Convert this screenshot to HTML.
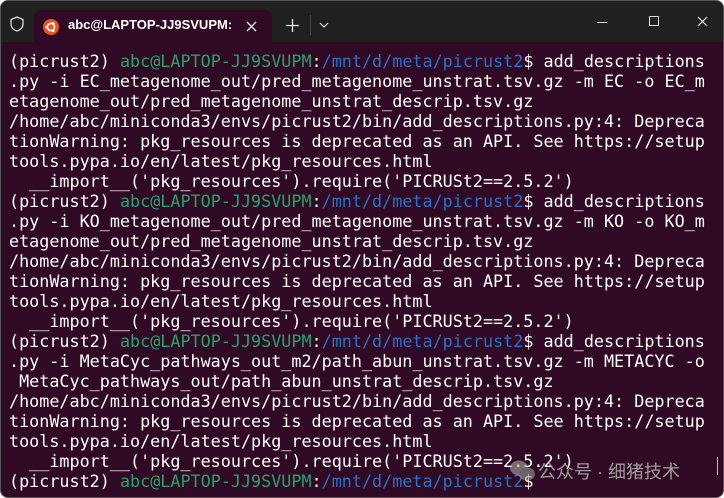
<!DOCTYPE html>
<html><head><meta charset="utf-8"><style>
*{margin:0;padding:0;box-sizing:border-box}
body{width:724px;height:498px;background:#fff;overflow:hidden;font-family:"Liberation Sans",sans-serif}
.win{position:absolute;left:0;top:0;width:724px;height:498px;background:#300a24;border-radius:8px;overflow:hidden;border:1px solid #555}
.tb{position:absolute;left:0;top:0;width:724px;height:41px;background:#202020}
.tab{position:absolute;left:33px;top:9px;width:238px;height:32px;background:#300a24;border-radius:7px 7px 0 0}
.tab .t{position:absolute;left:34px;top:7px;color:#fff;font-size:13px;font-weight:bold;white-space:nowrap;width:180px;overflow:hidden}
.term{position:absolute;left:8px;top:50px;font-family:"DejaVu Sans Mono","Liberation Mono",monospace;font-size:16.75px;line-height:20px;color:#fff;white-space:pre}
.g{color:#26a269}.b{color:#2a6fc8}
.wm{position:absolute;left:537px;top:457px;color:#aaa;font-family:"Liberation Sans","Noto Sans CJK SC",sans-serif;font-size:18px;opacity:.9}
</style></head><body><div class="win">
<div class="tb">
<svg style="position:absolute;left:9px;top:15px" width="14" height="16" viewBox="0 0 14 16"><path d="M7 1L1 3.5V8c0 3.5 2.7 6 6 7 3.3-1 6-3.5 6-7V3.5z" fill="none" stroke="#ddd" stroke-width="1.3"/></svg>
<div class="tab">
<svg style="position:absolute;left:9px;top:9px" width="16" height="16" viewBox="0 0 16 16"><circle cx="8" cy="8" r="8" fill="#e95420"/><circle cx="8" cy="8" r="3.6" fill="none" stroke="#fff" stroke-width="1.6"/><circle cx="3.8" cy="8" r="1.3" fill="#fff"/><circle cx="10.2" cy="4.3" r="1.3" fill="#fff"/><circle cx="10.2" cy="11.7" r="1.3" fill="#fff"/></svg>
<div class="t">abc@LAPTOP-JJ9SVUPM:</div>
<svg style="position:absolute;left:212px;top:11px" width="11" height="11"><path d="M1 1L10 10M10 1L1 10" stroke="#eee" stroke-width="1.3"/></svg>
</div>
<svg style="position:absolute;left:285px;top:18px" width="13" height="13"><path d="M6.5 0V13M0 6.5H13" stroke="#eee" stroke-width="1.3"/></svg>
<div style="position:absolute;left:309px;top:14px;width:1px;height:20px;background:#444"></div>
<svg style="position:absolute;left:318px;top:21px" width="10" height="6"><path d="M1 1L5 5L9 1" fill="none" stroke="#ddd" stroke-width="1.2"/></svg>
<div style="position:absolute;left:596px;top:21px;width:10px;height:1px;background:#ddd"></div>
<div style="position:absolute;left:648px;top:15px;width:10px;height:10px;border:1px solid #ddd"></div>
<svg style="position:absolute;left:696px;top:15px" width="11" height="11"><path d="M1 1L10 10M10 1L1 10" stroke="#eee" stroke-width="1.2"/></svg>
</div>
<div class="term">(picrust2) <span class="g">abc@LAPTOP-JJ9SVUPM</span>:<span class="b">/mnt/d/meta/picrust2</span>$ add_descriptions
.py -i EC_metagenome_out/pred_metagenome_unstrat.tsv.gz -m EC -o EC_m
etagenome_out/pred_metagenome_unstrat_descrip.tsv.gz
/home/abc/miniconda3/envs/picrust2/bin/add_descriptions.py:4: Depreca
tionWarning: pkg_resources is deprecated as an API. See https://setup
tools.pypa.io/en/latest/pkg_resources.html
  __import__('pkg_resources').require('PICRUSt2==2.5.2')
(picrust2) <span class="g">abc@LAPTOP-JJ9SVUPM</span>:<span class="b">/mnt/d/meta/picrust2</span>$ add_descriptions
.py -i KO_metagenome_out/pred_metagenome_unstrat.tsv.gz -m KO -o KO_m
etagenome_out/pred_metagenome_unstrat_descrip.tsv.gz
/home/abc/miniconda3/envs/picrust2/bin/add_descriptions.py:4: Depreca
tionWarning: pkg_resources is deprecated as an API. See https://setup
tools.pypa.io/en/latest/pkg_resources.html
  __import__('pkg_resources').require('PICRUSt2==2.5.2')
(picrust2) <span class="g">abc@LAPTOP-JJ9SVUPM</span>:<span class="b">/mnt/d/meta/picrust2</span>$ add_descriptions
.py -i MetaCyc_pathways_out_m2/path_abun_unstrat.tsv.gz -m METACYC -o
 MetaCyc_pathways_out/path_abun_unstrat_descrip.tsv.gz
/home/abc/miniconda3/envs/picrust2/bin/add_descriptions.py:4: Depreca
tionWarning: pkg_resources is deprecated as an API. See https://setup
tools.pypa.io/en/latest/pkg_resources.html
  __import__('pkg_resources').require('PICRUSt2==2.5.2')
(picrust2) <span class="g">abc@LAPTOP-JJ9SVUPM</span>:<span class="b">/mnt/d/meta/picrust2</span>$</div>
<svg style="position:absolute;left:508px;top:458px;opacity:.6" width="28" height="24" viewBox="0 0 28 24"><ellipse cx="10" cy="9" rx="9" ry="7.5" fill="#aaa"/><ellipse cx="18" cy="15" rx="8" ry="6.5" fill="#999"/></svg>
<div class="wm">公众号 · 细猪技术</div>
<div style="position:absolute;left:716px;top:456px;width:1px;height:18px;background:#bbb"></div>
</div></body></html>
